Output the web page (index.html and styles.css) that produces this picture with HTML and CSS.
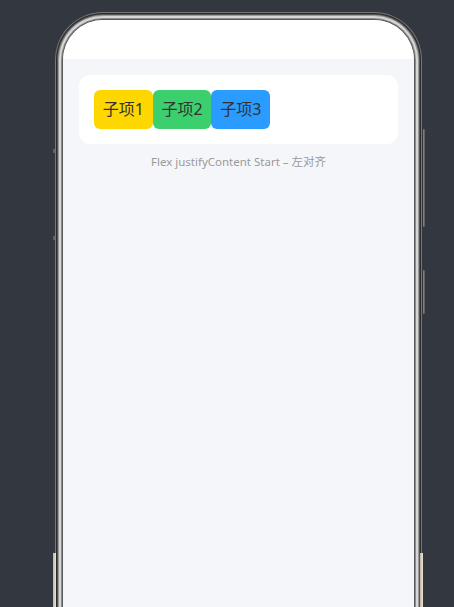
FILE: index.html
```html
<!DOCTYPE html>
<html lang="zh">
<head>
<meta charset="utf-8">
<title>Flex justifyContent Start</title>
<link rel="stylesheet" href="styles.css">
</head>
<body>
<div class="device">
  <span class="btn btn-l1"></span>
  <span class="btn btn-l2"></span>
  <span class="rocker rocker-1"></span>
  <span class="rocker rocker-2"></span>
  <span class="trim trim-l"></span>
  <span class="trim trim-r"></span>
  <div class="screen">
    <div class="status-bar"></div>
    <div class="content">
      <div class="card">
        <div class="row">
          <div class="item item-yellow">子项1</div>
          <div class="item item-green">子项2</div>
          <div class="item item-blue">子项3</div>
        </div>
      </div>
      <p class="caption">Flex justifyContent Start – 左对齐</p>
    </div>
  </div>
</div>
</body>
</html>
```

FILE: styles.css
```css
html, body {
  margin: 0;
  padding: 0;
  height: 100%;
  overflow: hidden;
  background: #323740;
}

body {
  font-family: "Noto Sans", "Noto Sans CJK SC", sans-serif;
}

.device {
  position: relative;
  margin: 20px 0 0 63px;
  width: 351px;
}

.screen {
  width: 351px;
  height: 587px;
  border-radius: 40px 40px 0 0;
  overflow: hidden;
  background: #f4f6fa;
  box-shadow:
    0 0 0 1px #5a5a5a,
    0 0 0 2px #8c8c8c,
    0 0 0 4px #d6d6d6,
    0 0 0 5px #9a9a9a,
    0 0 0 6px #555,
    0 0 0 7px #2a2a2a,
    0 0 0 8px #777;
  display: flex;
  flex-direction: column;
}

.status-bar {
  height: 39px;
  background: #ffffff;
  flex: none;
}

.content {
  padding: 16px;
  display: flex;
  flex-direction: column;
}

.card {
  background: #ffffff;
  border-radius: 11px;
  padding: 15px;
}

.row {
  display: flex;
  justify-content: flex-start;
}

.item {
  width: 58.7px;
  height: 39px;
  line-height: 39px;
  text-align: center;
  font-size: 16px;
  color: #333333;
  border-radius: 6px;
}

.item-yellow { background: #ffd700; }
.item-green { background: #3ccf6e; }
.item-blue { background: #2a9bff; }

.caption {
  margin: 10px 0 0;
  text-align: center;
  font-size: 11.5px;
  color: #9a9a9a;
  line-height: 16px;
}

.btn {
  position: absolute;
  width: 2px;
  height: 4px;
  background: #5c6068;
  left: -10px;
}
.btn-l1 { top: 129px; }
.btn-l2 { top: 216px; }

.rocker {
  position: absolute;
  left: 360px;
  width: 2px;
  background: linear-gradient(to right, #8a8a8a, #555);
  border-radius: 1px;
}
.rocker-1 { top: 109px; height: 98px; }
.rocker-2 { top: 250px; height: 44px; }

.trim {
  position: absolute;
  top: 533px;
  width: 3px;
  height: 54px;
  background: linear-gradient(to right, #bdb6a4, #ece6d6);
}
.trim-l { left: -10px; }
.trim-r { left: 357px; }
```
